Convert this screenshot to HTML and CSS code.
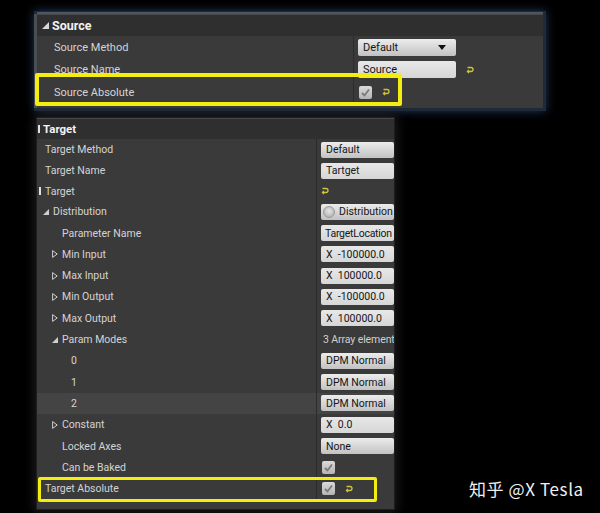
FILE: index.html
```html
<!DOCTYPE html>
<html>
<head>
<meta charset="utf-8">
<link rel="stylesheet" href="styles.css">
</head>
<body>
<div class="stage">
  <section class="panel p-source">
    <div class="hdr"><span class="ic"><svg width="7" height="7" viewBox="0 0 7 7"><polygon points="7,0 7,7 0,7" fill="#d8d8d8"/></svg></span>Source</div>
    <div class="row"><div class="lbl">Source Method</div><div class="val"><div class="combo wide">Default<svg class="caret" width="8" height="5" viewBox="0 0 8 5"><polygon points="0,0 8,0 4,5" fill="#111"/></svg></div></div></div>
    <div class="row"><div class="lbl">Source Name</div><div class="val"><div class="tbox wide">Source</div><svg class="reset" width="8" height="8" viewBox="0 0 8 8"><path d="M1.5 1.5H5a2 2 0 0 1 0 4H1.6" fill="none" stroke="#cfc43a" stroke-width="1.3"/><path d="M3 3.9L1.4 5.5 3 7.1" fill="none" stroke="#cfc43a" stroke-width="1.2"/></svg></div></div>
    <div class="row"><div class="lbl">Source Absolute</div><div class="val"><div class="chk"><svg width="13" height="13" viewBox="0 0 13 13"><polyline points="3,7 5.5,9.5 10,3.5" fill="none" stroke="#7a7a7a" stroke-width="1.8"/></svg></div><svg class="reset" width="8" height="8" viewBox="0 0 8 8"><path d="M1.5 1.5H5a2 2 0 0 1 0 4H1.6" fill="none" stroke="#cfc43a" stroke-width="1.3"/><path d="M3 3.9L1.4 5.5 3 7.1" fill="none" stroke="#cfc43a" stroke-width="1.2"/></svg></div></div>
  </section>

  <section class="panel p-target">
    <div class="hdr"><span class="ic bar-ic"><i class="bar"></i></span>Target</div>
    <div class="row"><div class="lbl l0">Target Method</div><div class="val"><div class="combo">Default</div></div></div>
    <div class="row"><div class="lbl l0">Target Name</div><div class="val"><div class="tbox">Tartget</div></div></div>
    <div class="row short"><div class="lbl l0b"><span class="ic w6"><i class="bar"></i></span>Target</div><div class="val"><svg class="reset" width="8" height="8" viewBox="0 0 8 8"><path d="M1.5 1.5H5a2 2 0 0 1 0 4H1.6" fill="none" stroke="#cfc43a" stroke-width="1.3"/><path d="M3 3.9L1.4 5.5 3 7.1" fill="none" stroke="#cfc43a" stroke-width="1.2"/></svg></div></div>
    <div class="row"><div class="lbl l1"><span class="ic"><svg width="6" height="6" viewBox="0 0 6 6"><polygon points="6,0 6,6 0,6" fill="#cfcfcf"/></svg></span>Distribution</div><div class="val"><div class="combo radio"><span class="dot"></span>Distribution</div></div></div>
    <div class="row"><div class="lbl l2">Parameter Name</div><div class="val"><div class="tbox tight">TargetLocation</div></div></div>
    <div class="row"><div class="lbl l2a"><span class="ic"><svg width="6" height="8" viewBox="0 0 6 8"><polygon points="0.6,0.6 5.2,4 0.6,7.4" fill="none" stroke="#cfcfcf" stroke-width="1"/></svg></span>Min Input</div><div class="val"><div class="tbox">X&nbsp;&nbsp;-100000.0</div></div></div>
    <div class="row"><div class="lbl l2a"><span class="ic"><svg width="6" height="8" viewBox="0 0 6 8"><polygon points="0.6,0.6 5.2,4 0.6,7.4" fill="none" stroke="#cfcfcf" stroke-width="1"/></svg></span>Max Input</div><div class="val"><div class="tbox">X&nbsp;&nbsp;100000.0</div></div></div>
    <div class="row"><div class="lbl l2a"><span class="ic"><svg width="6" height="8" viewBox="0 0 6 8"><polygon points="0.6,0.6 5.2,4 0.6,7.4" fill="none" stroke="#cfcfcf" stroke-width="1"/></svg></span>Min Output</div><div class="val"><div class="tbox">X&nbsp;&nbsp;-100000.0</div></div></div>
    <div class="row"><div class="lbl l2a"><span class="ic"><svg width="6" height="8" viewBox="0 0 6 8"><polygon points="0.6,0.6 5.2,4 0.6,7.4" fill="none" stroke="#cfcfcf" stroke-width="1"/></svg></span>Max Output</div><div class="val"><div class="tbox">X&nbsp;&nbsp;100000.0</div></div></div>
    <div class="row"><div class="lbl l2a"><span class="ic"><svg width="6" height="6" viewBox="0 0 6 6"><polygon points="6,0 6,6 0,6" fill="#cfcfcf"/></svg></span>Param Modes</div><div class="val"><span class="plain">3 Array element</span></div></div>
    <div class="row"><div class="lbl l3">0</div><div class="val"><div class="combo">DPM Normal</div></div></div>
    <div class="row"><div class="lbl l3">1</div><div class="val"><div class="combo">DPM Normal</div></div></div>
    <div class="row hover"><div class="lbl l3">2</div><div class="val"><div class="combo">DPM Normal</div></div></div>
    <div class="row"><div class="lbl l2a"><span class="ic"><svg width="6" height="8" viewBox="0 0 6 8"><polygon points="0.6,0.6 5.2,4 0.6,7.4" fill="none" stroke="#cfcfcf" stroke-width="1"/></svg></span>Constant</div><div class="val"><div class="tbox">X&nbsp;&nbsp;0.0</div></div></div>
    <div class="row"><div class="lbl l2">Locked Axes</div><div class="val"><div class="combo">None</div></div></div>
    <div class="row"><div class="lbl l2">Can be Baked</div><div class="val"><div class="chk"><svg width="13" height="13" viewBox="0 0 13 13"><polyline points="3,7 5.5,9.5 10,3.5" fill="none" stroke="#7a7a7a" stroke-width="1.8"/></svg></div></div></div>
    <div class="row"><div class="lbl l0">Target Absolute</div><div class="val"><div class="chk"><svg width="13" height="13" viewBox="0 0 13 13"><polyline points="3,7 5.5,9.5 10,3.5" fill="none" stroke="#7a7a7a" stroke-width="1.8"/></svg></div><svg class="reset" width="8" height="8" viewBox="0 0 8 8"><path d="M1.5 1.5H5a2 2 0 0 1 0 4H1.6" fill="none" stroke="#cfc43a" stroke-width="1.3"/><path d="M3 3.9L1.4 5.5 3 7.1" fill="none" stroke="#cfc43a" stroke-width="1.2"/></svg></div></div>
  </section>

  <div class="hl hl-source"></div>
  <div class="hl hl-target"></div>
  <div class="mark">知乎 @X Tesla</div>
</div>
</body>
</html>
```

FILE: styles.css
```css
* { box-sizing: border-box; }
html, body { margin: 0; padding: 0; background: #000; }
.stage {
  position: relative;
  width: 600px;
  height: 513px;
  overflow: hidden;
  background: #000;
  padding: 14px 0 0 37px;
  font-family: Roboto, "Liberation Sans", sans-serif;
  color: #d4d4d4;
}
.panel { background: #3a3a3a; overflow: hidden; }
.p-source {
  width: 506px;
  height: 94px;
  box-shadow: -3px 0 0 0 #4a4d52, 0 -2px 0 0 #4c5666, 0 0 0 3px #1f2a38, 0 0 9px 3px rgba(60,100,160,0.55);
}
.p-target {
  margin-top: 10px;
  width: 357px;
  height: 391px;
  box-shadow: 0 0 0 1px #1e1e1e, 0 0 10px 3px rgba(40,40,40,0.7);
}
.hdr {
  display: flex;
  align-items: center;
  font-weight: 700;
  color: #f2f2f2;
  background: #2f2f2f;
  border-top: 1px solid #474747;
}
.p-source .hdr { height: 22px; font-size: 12.5px; padding-left: 5px; }
.p-target .hdr { height: 21px; font-size: 11.5px; padding-left: 1px; }
.ic { display: inline-flex; align-items: center; width: 10px; flex: none; }
.p-target .hdr .ic { width: 5px; }
.ic.w6 { width: 6px; }
.bar { display: block; width: 2px; height: 8px; background: #e0e0e0; }
.row { display: grid; }
.p-source .row { grid-template-columns: 316px 1fr; height: 22.6px; font-size: 11px; }
.p-target .row { grid-template-columns: 279px 1fr; height: 21.3px; font-size: 10.5px; }
.p-target .row.short { height: 19.5px; }
.row.hover { background: #444; }
.lbl { display: flex; align-items: center; white-space: nowrap; }
.p-source .lbl { padding-left: 17px; }
.l0 { padding-left: 8px; }
.l0b { padding-left: 2px; }
.l1 { padding-left: 6px; }
.l2 { padding-left: 25px; }
.l2a { padding-left: 15px; }
.l3 { padding-left: 34px; }
.val {
  display: flex;
  align-items: center;
  gap: 10px;
  padding-left: 4px;
  border-left: 1px solid #2c2c2c;
  white-space: nowrap;
}
.combo, .tbox {
  flex: none;
  display: flex;
  align-items: center;
  height: 16px;
  width: 73px;
  padding: 0 5px;
  border-radius: 2px;
  color: #151515;
  overflow: hidden;
  font-size: 10.5px;
}
.tbox.tight { padding: 0 2px 0 4px; letter-spacing: -0.25px; }
.combo { background: linear-gradient(#ececec, #c2c2c2); }
.tbox { background: linear-gradient(#e8e8e8, #d6d6d6); }
.p-source .combo, .p-source .tbox { font-size: 11px; height: 17px; }
.wide { width: 98px; }
.combo.wide { justify-content: space-between; padding-right: 10px; }
.radio { padding-left: 2px; gap: 4px; }
.dot {
  width: 12px; height: 12px; border-radius: 50%; flex: none;
  background: radial-gradient(circle at 50% 40%, #e6e6e6, #a8a8a8);
  border: 1px solid #9a9a9a;
}
.plain { color: #cfcfcf; font-size: 10.5px; padding-left: 2px; letter-spacing: -0.1px; }
.chk {
  flex: none;
  width: 13px; height: 13px;
  border-radius: 2px;
  background: linear-gradient(#dadada, #b4b4b4);
  margin-left: 1px;
}
.chk svg { display: block; }
.reset { flex: none; }
.hl {
  position: absolute;
  border: 4px solid #f3ed12;
  border-radius: 2px;
}
.hl-source { left: 35px; top: 73px; width: 367px; height: 33px; }
.hl-target { left: 38px; top: 477px; width: 339px; height: 25px; border-width: 3.5px; }
.mark {
  position: absolute;
  left: 469px;
  top: 476px;
  font-family: "Noto Sans CJK SC", "Noto Sans", sans-serif;
  font-size: 17px;
  color: #f0f0f0;
  letter-spacing: 0.6px;
}
```
